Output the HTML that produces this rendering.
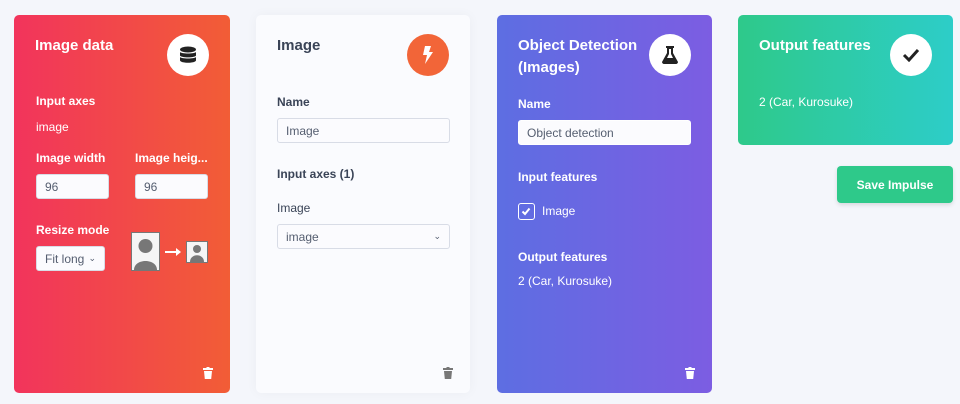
<!DOCTYPE html>
<html><head><style>
*{box-sizing:border-box;margin:0;padding:0}
body{width:960px;height:404px;background:#f4f6fb;font-family:"Liberation Sans",sans-serif;position:relative;overflow:hidden}
.card{position:absolute;top:15px;border-radius:5px;padding:22px 21px;color:#fff}
.c1{left:14px;width:216px;height:378px;background:linear-gradient(90deg,#f2345c,#f25d36)}
.c2{left:256px;width:214px;height:378px;background:#fafbfe;color:#3a4457;box-shadow:0 0 12px rgba(0,0,0,.04)}
.c3{left:497px;width:215px;height:378px;background:linear-gradient(90deg,#5d6ee2,#7c5de2)}
.c4{left:738px;width:215px;height:130px;background:linear-gradient(90deg,#2ec98a,#2dcdc8)}
h2{font-size:15px;font-weight:bold;line-height:22px;margin-top:-2px}
.ic{position:absolute;top:19px;right:21px;width:42px;height:42px;border-radius:50%;background:#fff;display:flex;align-items:center;justify-content:center}
.lbl{position:absolute;font-size:12px;font-weight:bold}
.txt{position:absolute;font-size:12px}
.inp{position:absolute;background:#fbfbfe;border:1px solid #d8dce6;border-radius:3px;font-size:12px;color:#555e70;padding:0 8px;display:flex;align-items:center}
.trash{position:absolute;bottom:14px;right:17px}
.btn{position:absolute;left:837px;top:166px;width:116px;height:37px;background:#2ec98a;border-radius:4px;color:#fff;font-size:12px;font-weight:bold;display:flex;align-items:center;justify-content:center;box-shadow:0 2px 4px rgba(0,0,0,.12)}
</style></head><body>
<div class="card c1">
<h2>Image data</h2>
<div class="ic"><svg width="18" height="18" viewBox="0 0 18 18" fill="#222"><ellipse cx="9" cy="3.5" rx="8" ry="3"/><path d="M1 6c1 2 15 2 16 0v3.5c-1 2.5-15 2.5-16 0z"/><path d="M1 11c1 2 15 2 16 0v3.5c-1 3-15 3-16 0z"/></svg></div>
<div class="lbl" style="left:22px;top:79px">Input axes</div>
<div class="txt" style="left:22px;top:105px">image</div>
<div class="lbl" style="left:22px;top:136px">Image width</div>
<div class="lbl" style="left:121px;top:136px">Image heig...</div>
<div class="inp" style="left:22px;top:159px;width:73px;height:25px">96</div>
<div class="inp" style="left:121px;top:159px;width:73px;height:25px">96</div>
<div class="lbl" style="left:22px;top:208px">Resize mode</div>
<div class="inp" style="left:22px;top:231px;width:69px;height:25px;justify-content:space-between">Fit long<span style="font-size:9px">⌄</span></div>
<svg style="position:absolute;left:117px;top:217px" width="80" height="40" viewBox="0 0 80 40"><rect x="0.5" y="0.5" width="28" height="38" fill="#f5f5f5" stroke="#777"/><circle cx="14.5" cy="14" r="7" fill="#777"/><path d="M3 38c0-12 23-12 23 0z" fill="#777"/><path d="M34 20h12" stroke="#fff" stroke-width="2"/><path d="M45 16l5 4-5 4z" fill="#fff"/><rect x="55.5" y="9.5" width="21" height="21" fill="#f5f5f5" stroke="#777"/><circle cx="66" cy="17" r="4" fill="#777"/><path d="M59 30c0-9 14-9 14 0z" fill="#777"/></svg>
<svg class="trash" width="10" height="12" viewBox="0 0 10 12" fill="#fff"><rect x="0" y="1" width="10" height="2"/><rect x="3.5" y="0" width="3" height="2"/><path d="M1 4h8l-.8 8H1.8z"/></svg>
</div>
<div class="card c2">
<h2>Image</h2>
<div class="ic" style="background:#f26538"><svg width="12" height="18" viewBox="0 0 12 18" fill="#fff"><path d="M3 0h6L7 6h4L3 18l2-9H1z"/></svg></div>
<div class="lbl" style="left:21px;top:80px">Name</div>
<div class="inp" style="left:21px;top:103px;width:173px;height:25px">Image</div>
<div class="lbl" style="left:21px;top:152px">Input axes (1)</div>
<div class="txt" style="left:21px;top:186px">Image</div>
<div class="inp" style="left:21px;top:209px;width:173px;height:25px;justify-content:space-between">image<span style="font-size:9px">⌄</span></div>
<svg class="trash" width="10" height="12" viewBox="0 0 10 12" fill="#777"><rect x="0" y="1" width="10" height="2"/><rect x="3.5" y="0" width="3" height="2"/><path d="M1 4h8l-.8 8H1.8z"/></svg>
</div>
<div class="card c3">
<h2>Object Detection<br>(Images)</h2>
<div class="ic"><svg width="16" height="18" viewBox="0 0 16 18" fill="#222"><rect x="4" y="0" width="8" height="2"/><path d="M5 2h6v5l5 9c0 1-1 2-2 2H2c-1 0-2-1-2-2l5-9z"/><path d="M7 3h2v5l2 4H5l2-4z" fill="#fff"/></svg></div>
<div class="lbl" style="left:21px;top:82px">Name</div>
<div class="inp" style="left:21px;top:105px;width:173px;height:25px;border-color:#fff">Object detection</div>
<div class="lbl" style="left:21px;top:155px">Input features</div>
<div style="position:absolute;left:21px;top:188px;width:17px;height:17px;border:1.5px solid #fff;border-radius:3px"><svg width="14" height="14" viewBox="0 0 14 14"><path d="M3.5 7.5l2.5 2.5 4.5-5.5" stroke="#fff" stroke-width="2" fill="none"/></svg></div>
<div class="txt" style="left:45px;top:189px">Image</div>
<div class="lbl" style="left:21px;top:235px">Output features</div>
<div class="txt" style="left:21px;top:259px">2 (Car, Kurosuke)</div>
<svg class="trash" width="10" height="12" viewBox="0 0 10 12" fill="#fff"><rect x="0" y="1" width="10" height="2"/><rect x="3.5" y="0" width="3" height="2"/><path d="M1 4h8l-.8 8H1.8z"/></svg>
</div>
<div class="card c4">
<h2>Output features</h2>
<div class="ic"><svg width="18" height="14" viewBox="0 0 18 14"><path d="M2 7l5 5 9-10" stroke="#222" stroke-width="3" fill="none"/></svg></div>
<div class="txt" style="left:21px;top:80px">2 (Car, Kurosuke)</div>
</div>
<div class="btn">Save Impulse</div>
</body></html>
